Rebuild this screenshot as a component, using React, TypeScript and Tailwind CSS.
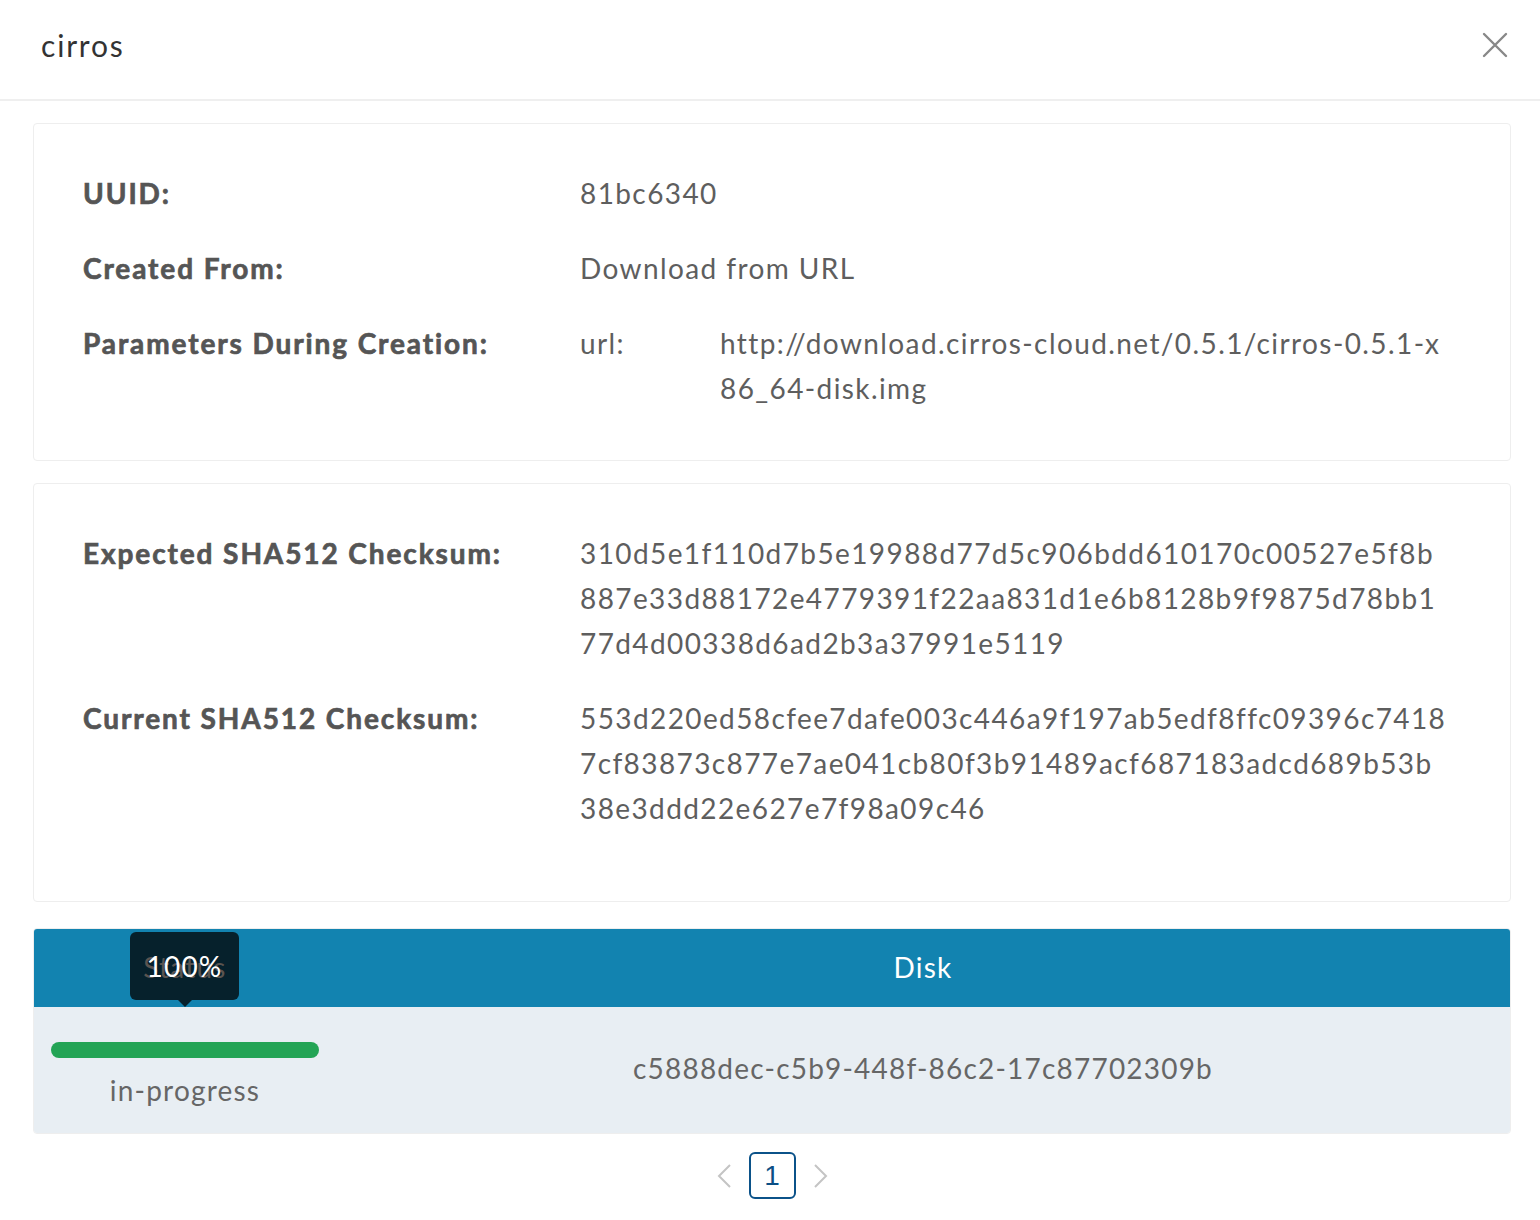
import React from "react";

const EXPECTED = [
  "310d5e1f110d7b5e19988d77d5c906bdd610170c00527e5f8b",
  "887e33d88172e4779391f22aa831d1e6b8128b9f9875d78bb1",
  "77d4d00338d6ad2b3a37991e5119",
];
const CURRENT = [
  "553d220ed58cfee7dafe003c446a9f197ab5edf8ffc09396c7418",
  "7cf83873c877e7ae041cb80f3b91489acf687183adcd689b53b",
  "38e3ddd22e627e7f98a09c46",
];

function Lines({ lines }: { lines: string[] }) {
  return (
    <div>
      {lines.map((l) => (
        <div key={l}>{l}</div>
      ))}
    </div>
  );
}

function Row({ label, children }: { label: string; children: React.ReactNode }) {
  return (
    <div className="grid grid-cols-[497px_1fr] mb-[30px] last:mb-0">
      <div className="font-bold text-[#555] tracking-[1.9px] [-webkit-text-stroke:0.7px_#555]">{label}</div>
      <div className="text-[#5e5e5e] tracking-[1.4px]">{children}</div>
    </div>
  );
}

export default function App() {
  return (
    <div className="min-h-screen bg-white font-['Lato',sans-serif] text-[28px] leading-[45px]">
      <div className="h-[101px] flex items-center justify-between pl-[41px] pr-[32px] border-b-2 border-[#efefef]">
        <div className="text-[#333] text-[30px] tracking-[1.8px] -mt-[9px]">cirros</div>
        <button className="-mt-[9px] text-[#888]" title="Close">
          <svg width="26" height="26" viewBox="0 0 26 26" fill="none" stroke="currentColor" strokeWidth="2.4" strokeLinecap="round">
            <path d="M2 2 L24 24 M24 2 L2 24" />
          </svg>
        </button>
      </div>

      <div className="pl-[33px] pr-[29px] pt-[22px]">
        <div className="border border-[#eee] rounded pl-[49px] pr-[49px] pt-[47px] pb-[49px]">
          <Row label="UUID:">81bc6340</Row>
          <Row label="Created From:">Download from URL</Row>
          <Row label="Parameters During Creation:">
            <div className="grid grid-cols-[140px_1fr]">
              <div>url:</div>
              <div>
                <div>http://download.cirros-cloud.net/0.5.1/cirros-0.5.1-x</div>
                <div>86_64-disk.img</div>
              </div>
            </div>
          </Row>
        </div>

        <div className="mt-[22px] border border-[#eee] rounded pl-[49px] pr-[49px] pt-[47px] pb-[70px]">
          <Row label="Expected SHA512 Checksum:">
            <Lines lines={EXPECTED} />
          </Row>
          <Row label="Current SHA512 Checksum:">
            <Lines lines={CURRENT} />
          </Row>
        </div>

        <div className="relative mt-[26px] border border-[#eee] rounded overflow-hidden tracking-[1.2px]">
          <div className="grid grid-cols-[302px_1fr] h-[78px] pb-[2px] bg-[#1283b0] items-center text-center">
            <span className="relative z-20 text-[#5a5450]">Status</span>
            <span className="text-white">Disk</span>
          </div>
          <div className="grid grid-cols-[302px_1fr] bg-[#e8eef3] items-center text-center text-[#666]">
            <div className="flex flex-col items-center pt-[35px] pb-[17px]">
              <div className="w-[268px] h-[16px] rounded-full bg-[#23a455]" />
              <div className="mt-[10px] mb-[3px]">in-progress</div>
            </div>
            <div className="pb-[3px]">c5888dec-c5b9-448f-86c2-17c87702309b</div>
          </div>

          <div className="absolute left-[96px] top-[3px] w-[109px] h-[68px] flex items-center justify-center">
            <div className="absolute inset-0 z-10 rounded-[6px] bg-[#06212c]" />
            <div className="absolute z-10 left-1/2 -bottom-[7px] -ml-[8px] w-0 h-0 border-l-[8px] border-r-[8px] border-t-[8px] border-l-transparent border-r-transparent border-t-[#06212c]" />
            <span className="relative z-30 text-white">100%</span>
          </div>
        </div>

        <div className="flex items-center justify-center gap-[17px] mt-[18px]">
          <svg width="16" height="26" viewBox="0 0 16 26" fill="none" stroke="#c4c4c4" strokeWidth="2">
            <path d="M14 2 L3 13 L14 24" />
          </svg>
          <div className="w-[47px] h-[47px] border-2 border-[#0b5289] rounded-[6px] flex items-center justify-center text-[#0b4f85] font-['Liberation_Sans',sans-serif]">
            1
          </div>
          <svg width="16" height="26" viewBox="0 0 16 26" fill="none" stroke="#c4c4c4" strokeWidth="2">
            <path d="M2 2 L13 13 L2 24" />
          </svg>
        </div>
      </div>
    </div>
  );
}
